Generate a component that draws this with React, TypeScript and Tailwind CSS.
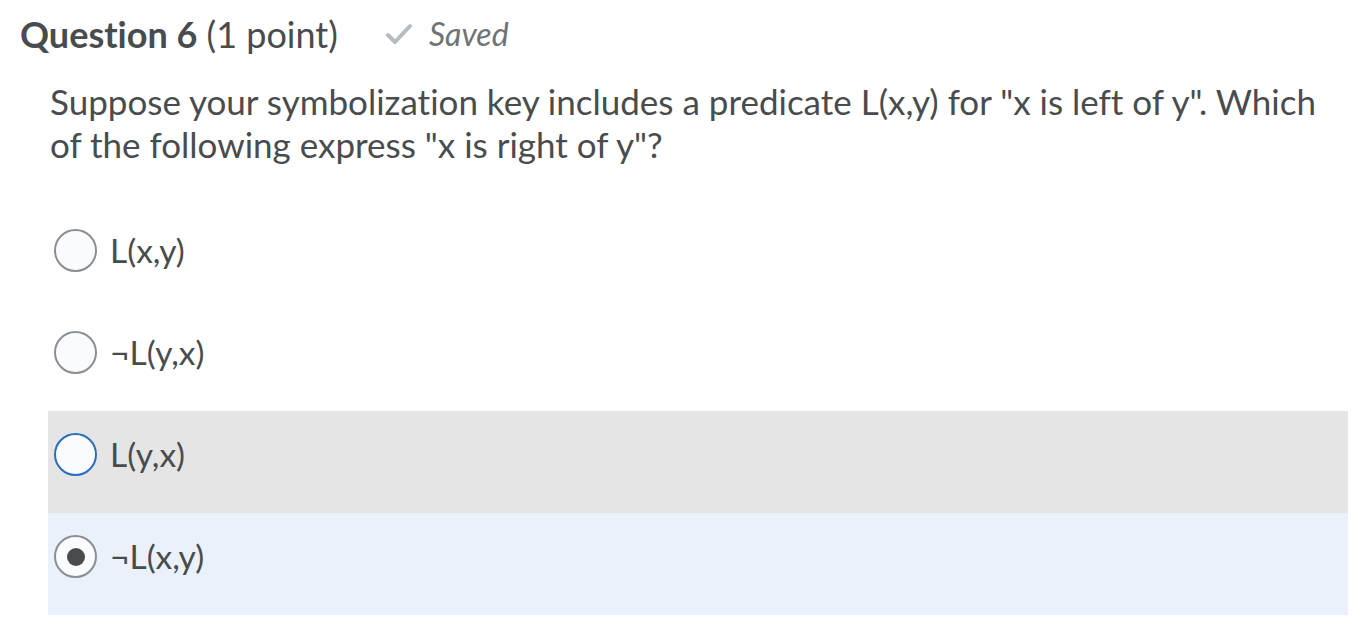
import React from "react";

type Choice = { label: string; state: "idle" | "hover" | "checked" };

const choices: Choice[] = [
  { label: "L(x,y)", state: "idle" },
  { label: "¬L(y,x)", state: "idle" },
  { label: "L(y,x)", state: "hover" },
  { label: "¬L(x,y)", state: "checked" },
];

const Radio: React.FC<{ state: Choice["state"] }> = ({ state }) => {
  const border = state === "hover" ? "border-[#2a6ebd]" : "border-[#8a8f92]";
  return (
    <span
      className={`flex items-center justify-center w-[43px] h-[43px] shrink-0 rounded-full border-2 bg-[#f9fbff] ${border}`}
    >
      {state === "checked" && <span className="w-[18px] h-[18px] rounded-full bg-[#494c4e]" />}
    </span>
  );
};

const App: React.FC = () => {
  return (
    <div className="w-[1372px] h-[640px] bg-white text-[#494c4e] font-['Lato',sans-serif] [font-variant-ligatures:none]">
      <div className="flex items-center pl-5 pt-[10px]">
        <h2 className="text-[36px] leading-[40px]">
          <span className="font-bold">Question 6</span> (1 point)
        </h2>
        <div className="flex items-center ml-[48px] gap-[17px]">
          <svg width="26" height="22" viewBox="0 0 26 22" fill="none">
            <path d="M2 12 L9 19 L24 3" stroke="#b5bcc0" strokeWidth="4" strokeLinecap="round" strokeLinejoin="round" />
          </svg>
          <span className="italic text-[32px] text-[#6e7376]">Saved</span>
        </div>
      </div>

      <p className="ml-[50px] mr-[30px] mt-[22px] text-[35px] leading-[43px]">
        Suppose your symbolization key includes a predicate L(x,y) for "x is left of y". Which of the following express "x
        is right of y"?
      </p>

      <div className="flex flex-col ml-12 mr-6 mt-[41px]">
        {choices.map((c) => (
          <div
            key={c.label}
            className={`flex items-start gap-[13px] h-[102px] pt-[22px] pl-[6px] ${
              c.state === "hover" ? "bg-[#e5e5e5]" : c.state === "checked" ? "bg-[#eaf1fb]" : ""
            }`}
          >
            <Radio state={c.state} />
            <span className="text-[33.5px] leading-[43px]">{c.label}</span>
          </div>
        ))}
      </div>
    </div>
  );
};

export default App;
